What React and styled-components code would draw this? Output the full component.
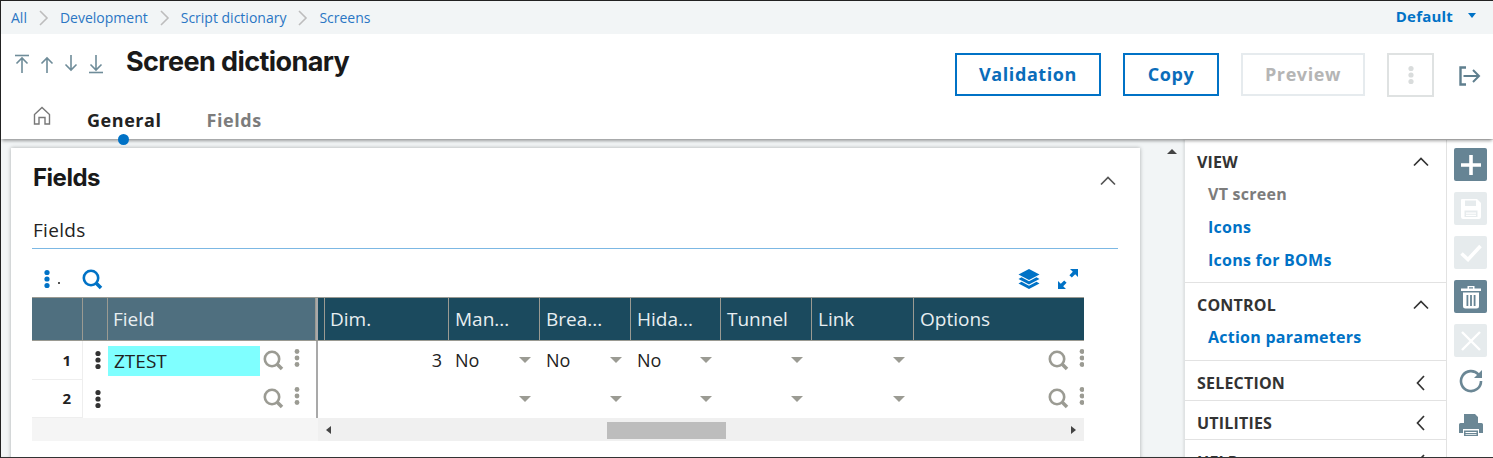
import React from 'react'
import styled, { createGlobalStyle } from 'styled-components'

const GlobalStyle = createGlobalStyle`
  html, body {
    margin: 0;
    padding: 0;
    background: #fff;
  }
  * {
    box-sizing: border-box;
  }
`

const TEMPLATE = '51px 25px 208px 2px 6px 125px 91px 91px 90px 91px 102px 170px'

const ArrowIcon = ({ dir, bar }) => (
  <svg width="16" height="22" viewBox="0 0 16 22" fill="none" stroke="#6f8c99" strokeWidth="1.6">
    <g transform={dir === 'down' ? 'rotate(180 8 11)' : undefined}>
      {bar && <path d="M1 2.500h14" />}
      <path d="M8 20V5M2.500 10.500 8 5l5.500 5.500" />
    </g>
  </svg>
)

const HomeIcon = () => (
  <svg width="18" height="20" viewBox="0 0 18 20" fill="none" stroke="#777" strokeWidth="1.4">
    <path d="M1.500 18V8.500L9 1.500l7.500 7V18h-4.500v-6.500H6V18z" />
  </svg>
)

const ExitIcon = () => (
  <svg width="22" height="20" viewBox="0 0 22 20" fill="none" stroke="#5f7f8e" strokeWidth="2">
    <path d="M7 1.500H1.500v17H7" strokeWidth="2.400" />
    <path d="M4.500 10h15.500M14 4l6 6-6 6" />
  </svg>
)

const SearchIcon = ({ color = '#9b9b93', size = 21 }) => (
  <svg width={size} height={size} viewBox="0 0 21 21" fill="none" stroke={color}>
    <circle cx="9" cy="9" r="7.200" strokeWidth="2.600" />
    <path d="M14 14l5 5" strokeWidth="3.600" />
  </svg>
)

const Dots = ({ color = '#9b9b93', size = 2.4, height = 20 }) => (
  <svg width="8" height={height} viewBox={`0 0 8 ${height}`} fill={color}>
    <circle cx="4" cy={height / 2 - 6.500} r={size} />
    <circle cx="4" cy={height / 2} r={size} />
    <circle cx="4" cy={height / 2 + 6.500} r={size} />
  </svg>
)

const LayersIcon = () => (
  <svg width="22" height="20" viewBox="0 0 22 20" fill="#0072c6">
    <path d="M11 0l10.500 5.500L11 11 .5 5.500z" />
    <path d="M3.500 8.300L11 12.300l7.500-4 3 1.600L11 15.500.5 9.900z" />
    <path d="M3.500 12.800L11 16.800l7.500-4 3 1.600L11 20 .5 14.400z" />
  </svg>
)

const ExpandIcon = () => (
  <svg width="20" height="20" viewBox="0 0 20 20" fill="#0072c6">
    <path d="M12 0h8v8l-2.800-2.800-3.400 3.400-2.400-2.400 3.400-3.400z" />
    <path d="M0 20v-8l2.800 2.800 3.400-3.400 2.400 2.400-3.400 3.400L8 20z" />
  </svg>
)

const Chevron = ({ dir, color = '#333' }) => (
  <svg width="16" height="16" viewBox="0 0 16 16" fill="none" stroke={color} strokeWidth="1.700">
    {dir === 'up' ? <path d="M1 11.500 8 4.500l7 7" /> : <path d="M11 1 4.500 8 11 15" />}
  </svg>
)

const PlusIcon = () => (
  <svg width="22" height="22" viewBox="0 0 22 22" fill="#fff">
    <path d="M9.200 1h3.600v8.200H21v3.600h-8.200V21H9.200v-8.200H1V9.200h8.200z" />
  </svg>
)

const SaveIcon = () => (
  <svg width="22" height="22" viewBox="0 0 22 22" fill="#fff">
    <path d="M2 1h15l4 4v14a2 2 0 0 1-2 2H3a2 2 0 0 1-2-2V2a1 1 0 0 1 1-1zm3 1.500V8h11V2.500zM4.500 12.500V19h13v-6.500z" fillRule="evenodd" />
    <path d="M6 14.500h10v1.200H6zM6 16.800h10V18H6z" />
  </svg>
)

const CheckIcon = () => (
  <svg width="22" height="18" viewBox="0 0 22 18" fill="none" stroke="#fff" strokeWidth="3.600">
    <path d="M1.500 9.500 8 15.500 20.500 2" />
  </svg>
)

const TrashIcon = () => (
  <svg width="20" height="24" viewBox="0 0 20 24" fill="#fff">
    <path d="M0 3.500h6.500V1h7v2.500H20V6H0zM8 2.200v1.300h4V2.200z" fillRule="evenodd" />
    <path d="M2 7.500h16V21a2.500 2.500 0 0 1-2.500 2.500h-11A2.500 2.500 0 0 1 2 21zm3.500 2.500v11h1.800V10zm3.600 0v11h1.800V10zm3.600 0v11h1.800V10z" fillRule="evenodd" />
  </svg>
)

const CloseIcon = () => (
  <svg width="22" height="22" viewBox="0 0 22 22" fill="none" stroke="#fff" strokeWidth="2.400">
    <path d="M2 2l18 18M20 2 2 20" />
  </svg>
)

const RefreshIcon = () => (
  <svg width="24" height="24" viewBox="0 0 24 24" fill="none" stroke="#6b8795" strokeWidth="2.600">
    <path d="M19.500 5.500A10 10 0 1 0 22 12" />
    <path d="M23 1v8h-8z" fill="#6b8795" stroke="none" />
  </svg>
)

const PrintIcon = () => (
  <svg width="24" height="24" viewBox="0 0 24 24" fill="#6b8795">
    <path d="M5 1h11l3 3v6H5zM0 11.500A1.500 1.500 0 0 1 1.500 10h21a1.500 1.500 0 0 1 1.500 1.500V20h-4v-4H4v4H0z" />
    <path d="M5 17.500h14V23H5zm1.500 1.500v1h11v-1zm0 2v.8h11V21z" fillRule="evenodd" />
  </svg>
)

const crumbs = ['All', 'Development', 'Script dictionary', 'Screens']

const dataCols = [
  { title: 'Man...' },
  { title: 'Brea...' },
  { title: 'Hida...' },
  { title: 'Tunnel', empty: true },
  { title: 'Link', empty: true }
]

const rows = [
  { id: 1, field: 'ZTEST', dim: '3', value: 'No' },
  { id: 2, field: '', dim: '', value: '' }
]

const sideGroups = [
  {
    title: 'VIEW',
    open: true,
    pad: 4,
    links: [
      { label: 'VT screen', muted: true },
      { label: 'Icons' },
      { label: 'Icons for BOMs' }
    ]
  },
  { title: 'CONTROL', open: true, pad: 5, links: [{ label: 'Action parameters' }] },
  { title: 'SELECTION' },
  { title: 'UTILITIES' },
  { title: 'HELP' }
]

const App = () => (
  <>
    <GlobalStyle />
    <Frame>
      <Breadcrumb>
        <CrumbList>
          {crumbs.map((crumb, i) => (
            <React.Fragment key={crumb}>
              {i > 0 && (
                <svg width="11" height="16" viewBox="0 0 11 16" fill="none" stroke="#bdbdbd" strokeWidth="1.600">
                  <path d="M2 1l7 7-7 7" />
                </svg>
              )}
              <Crumb>{crumb}</Crumb>
            </React.Fragment>
          ))}
        </CrumbList>
        <Default>
          Default
          <Caret />
        </Default>
      </Breadcrumb>

      <Header>
        <Arrows>
          <ArrowIcon dir="up" bar />
          <ArrowIcon dir="up" />
          <ArrowIcon dir="down" />
          <ArrowIcon dir="down" bar />
        </Arrows>
        <Title>Screen dictionary</Title>
        <Actions>
          <ActionButton $w={146}>Validation</ActionButton>
          <ActionButton $w={96}>Copy</ActionButton>
          <ActionButton $w={124} $disabled>Preview</ActionButton>
          <MoreButton>
            <Dots color="#d9dcdc" size={2.6} height={20} />
          </MoreButton>
          <ExitSlot>
            <ExitIcon />
          </ExitSlot>
        </Actions>
      </Header>

      <Tabs>
        <HomeSlot>
          <HomeIcon />
        </HomeSlot>
        <Tab $active>General</Tab>
        <Tab>Fields</Tab>
      </Tabs>

      <Body>
        <Content>
          <Card>
            <CardHeader>
              <CardTitle>Fields</CardTitle>
              <Chevron dir="up" color="#555" />
            </CardHeader>
            <SubTitle>Fields</SubTitle>
            <Toolbar>
              <ToolGroup>
                <Dots color="#0072c6" size={2.6} height={20} />
                <TinyDot />
                <SearchIcon color="#0072c6" />
              </ToolGroup>
              <ToolGroup $gap={18}>
                <LayersIcon />
                <ExpandIcon />
              </ToolGroup>
            </Toolbar>
            <Table>
              <HeadRow>
                <HeadCell $frozen />
                <HeadCell $frozen />
                <HeadCell $frozen>Field</HeadCell>
                <FrozenBar />
                <HeadCell />
                <HeadCell>Dim.</HeadCell>
                {dataCols.map(col => (
                  <HeadCell key={col.title}>{col.title}</HeadCell>
                ))}
                <HeadCell>Options</HeadCell>
              </HeadRow>
              {rows.map(row => (
                <Row key={row.id}>
                  <RowNumber>{row.id}</RowNumber>
                  <RowMenu>
                    <Dots color="#333" size={2.6} height={20} />
                  </RowMenu>
                  <FieldCell>
                    <FieldValue $filled={!!row.field}>{row.field}</FieldValue>
                    <SearchIcon />
                    <Dots />
                  </FieldCell>
                  <FrozenBar />
                  <span />
                  <DimCell>{row.dim}</DimCell>
                  {dataCols.map(col => (
                    <SelectCell key={col.title}>
                      <span>{col.empty ? '' : row.value}</span>
                      <SelectCaret />
                    </SelectCell>
                  ))}
                  <OptionsCell>
                    <SearchIcon />
                    <Dots />
                  </OptionsCell>
                </Row>
              ))}
              <ScrollRow>
                <ScrollStub />
                <ScrollTrack>
                  <ScrollArrow $left />
                  <ScrollThumb />
                  <ScrollArrow />
                </ScrollTrack>
              </ScrollRow>
            </Table>
          </Card>
          <PageScroll>
            <ScrollUp />
          </PageScroll>
        </Content>

        <Sidebar>
          {sideGroups.map(group => (
            <SideGroup key={group.title} $pad={group.pad}>
              <SideHead $open={group.open}>
                {group.title}
                <Chevron dir={group.open ? 'up' : 'left'} />
              </SideHead>
              {group.links && group.links.map(link => (
                <SideLink key={link.label} $muted={link.muted}>{link.label}</SideLink>
              ))}
            </SideGroup>
          ))}
        </Sidebar>

        <Rail>
          <RailButton $on><PlusIcon /></RailButton>
          <RailButton><SaveIcon /></RailButton>
          <RailButton><CheckIcon /></RailButton>
          <RailButton $on><TrashIcon /></RailButton>
          <RailButton><CloseIcon /></RailButton>
          <RailPlain $h={26}><RefreshIcon /></RailPlain>
          <RailPlain $h={40}><PrintIcon /></RailPlain>
        </Rail>
      </Body>
    </Frame>
  </>
)

const Frame = styled.div`
  width: 1493px;
  height: 458px;
  display: flex;
  flex-direction: column;
  overflow: hidden;
  border-top: 1px solid #222;
  border-left: 1px solid #222;
  border-bottom: 1px solid #333;
  font-family: "Open Sans", sans-serif;
  color: #222;
`

const Breadcrumb = styled.div`
  height: 33px;
  flex: none;
  display: flex;
  align-items: center;
  justify-content: space-between;
  padding: 0 17px 0 10px;
  background: #f2f5f6;
`

const CrumbList = styled.div`
  display: flex;
  align-items: center;
  gap: 11px;
`

const Crumb = styled.span`
  font-size: 14px;
  color: #2a76c4;
`

const Default = styled.div`
  display: flex;
  align-items: center;
  gap: 15px;
  margin-top: -4px;
  font-size: 15px;
  font-weight: 700;
  letter-spacing: 0.2px;
  color: #0072c6;
`

const Caret = styled.i`
  width: 0;
  height: 0;
  margin-top: -1px;
  border-left: 4px solid transparent;
  border-right: 4px solid transparent;
  border-top: 5px solid #0072c6;
`

const Header = styled.div`
  height: 67px;
  flex: none;
  display: flex;
  padding: 17px 0 0 13px;
`

const Arrows = styled.div`
  display: flex;
  gap: 8.5px;
  height: 26px;
  align-items: center;
`

const Title = styled.h1`
  margin: -6px 0 0 22.5px;
  font-family: Inter, sans-serif;
  font-size: 27px;
  line-height: 34px;
  font-weight: 700;
  letter-spacing: -0.6px;
  color: #191919;
`

const Actions = styled.div`
  margin-left: auto;
  display: flex;
  align-items: flex-start;
  gap: 22px;
  padding: 2px 12px 0 0;
`

const ActionButton = styled.div`
  width: ${p => p.$w}px;
  height: 43px;
  display: flex;
  align-items: center;
  justify-content: center;
  padding-bottom: 2px;
  border: 2px solid ${p => (p.$disabled ? '#e6ebee' : '#0072c6')};
  font-size: 18px;
  font-weight: 700;
  letter-spacing: 0.6px;
  color: ${p => (p.$disabled ? '#b5b5b5' : '#0a6dba')};
`

const MoreButton = styled.div`
  width: 47px;
  height: 44px;
  display: flex;
  align-items: center;
  justify-content: center;
  border: 2px solid #dfe2e2;
`

const ExitSlot = styled.div`
  margin: 13px 0 0 3px;
  display: flex;
`

const Tabs = styled.div`
  height: 38px;
  flex: none;
  display: flex;
  align-items: flex-start;
  position: relative;
  z-index: 2;
  box-shadow: 0 3px 3px -1px rgba(0, 0, 0, 0.35);
  background: #fff;
`

const HomeSlot = styled.div`
  width: 86px;
  padding: 5px 0 0 32px;
`

const Tab = styled.div`
  position: relative;
  margin-right: 45px;
  font-size: 18px;
  font-weight: 700;
  line-height: 24px;
  padding-top: 7px;
  letter-spacing: 0.55px;
  color: ${p => (p.$active ? '#222' : '#7c7c7c')};

  ${p => p.$active && `
    &::after {
      content: '';
      position: absolute;
      left: 50%;
      bottom: -13px;
      width: 11px;
      height: 11px;
      margin-left: -6px;
      border-radius: 50%;
      background: #0072c6;
    }
  `}
`

const Body = styled.div`
  flex: 1;
  display: flex;
  min-height: 0;
`

const Content = styled.div`
  width: 1184px;
  flex: none;
  display: flex;
  align-items: flex-start;
  padding: 9px 0 0 10px;
  background: #f2f5f6;
  box-shadow: inset -2px 0 2px rgba(0, 0, 0, 0.08);
`

const Card = styled.div`
  width: 1129px;
  height: 340px;
  flex: none;
  padding: 0 22px 0 21px;
  background: #fff;
  box-shadow: 0 0 4px rgba(0, 0, 0, 0.3);
`

const CardHeader = styled.div`
  height: 58px;
  display: flex;
  align-items: center;
  justify-content: space-between;
  padding: 0 2px 0 1px;

  svg {
    margin-top: 8px;
  }
`

const CardTitle = styled.h2`
  margin: 0;
  font-family: Inter, sans-serif;
  font-size: 24px;
  font-weight: 700;
  letter-spacing: -0.5px;
  color: #191919;
`

const SubTitle = styled.div`
  height: 43px;
  padding: 12px 0 0 1px;
  border-bottom: 1px solid #7cb8e4;
  font-size: 19px;
  line-height: 24px;
  letter-spacing: 0.3px;
  color: #222;
`

const Toolbar = styled.div`
  height: 48px;
  display: flex;
  align-items: center;
  justify-content: space-between;
  padding: 12px 40px 0 11px;
`

const ToolGroup = styled.div`
  display: flex;
  align-items: center;
  gap: ${p => p.$gap || 9}px;
`

const TinyDot = styled.i`
  width: 2px;
  height: 2px;
  margin: 8px 13px 0 -2px;
  background: #555;
`

const Table = styled.div`
  width: 1052px;
  font-size: 18px;
`

const HeadRow = styled.div`
  display: grid;
  grid-template-columns: ${TEMPLATE};
  height: 44px;
  background: #1b4a5e;
  border-top: 1px solid #9a9a92;
  border-bottom: 1px solid #9a9a92;
`

const HeadCell = styled.div`
  padding-left: ${p => (p.$frozen ? 5 : 6)}px;
  font-size: 19px;
  line-height: 42px;
  color: #e8eef1;
  white-space: nowrap;
  overflow: hidden;
  border-right: 1px solid #9a9a92;
  background: ${p => (p.$frozen ? '#4f6f7f' : 'transparent')};

  &:last-child {
    border-right: 0;
  }
`

const FrozenBar = styled.div`
  background: #a9a9a9;
`

const Row = styled.div`
  display: grid;
  grid-template-columns: ${TEMPLATE};
  height: 38.500px;
  align-items: stretch;
`

const RowNumber = styled.div`
  display: flex;
  align-items: center;
  justify-content: flex-end;
  padding-right: 11px;
  font-size: 15px;
  font-weight: 700;
  border-right: 1px solid #eee;
  border-bottom: 1px solid #eee;
`

const RowMenu = styled.div`
  display: flex;
  align-items: center;
  justify-content: center;
  padding-left: 4px;
`

const FieldCell = styled.div`
  display: flex;
  align-items: center;

  svg:last-child {
    margin: -5px 0 0 9px;
  }

  svg:nth-child(2) {
    margin-left: 3px;
  }
`

const FieldValue = styled.div`
  width: 152px;
  height: 30px;
  margin-top: 1px;
  padding-left: 6px;
  font-size: 19px;
  line-height: 31px;
  background: ${p => (p.$filled ? '#7fffff' : 'transparent')};
`

const DimCell = styled.div`
  display: flex;
  align-items: center;
  justify-content: flex-end;
  padding-right: 7px;
`

const SelectCell = styled.div`
  display: flex;
  align-items: center;
  justify-content: space-between;
  padding: 0 9px 0 6px;
`

const SelectCaret = styled.i`
  width: 0;
  height: 0;
  border-left: 6px solid transparent;
  border-right: 6px solid transparent;
  border-top: 6px solid #9b9b93;
`

const OptionsCell = styled.div`
  display: flex;
  align-items: center;
  justify-content: flex-end;
  gap: 9px;
  overflow: hidden;

  svg:last-child {
    margin: -5px -2px 0 0;
  }
`

const ScrollRow = styled.div`
  display: flex;
  height: 23px;
`

const ScrollStub = styled.div`
  width: 286px;
  background: #f5f5f5;
`

const ScrollTrack = styled.div`
  flex: 1;
  display: flex;
  align-items: center;
  justify-content: space-between;
  position: relative;
  padding: 0 8px;
  background: #f0f0f0;
`

const ScrollArrow = styled.i`
  width: 0;
  height: 0;
  border-top: 4px solid transparent;
  border-bottom: 4px solid transparent;
  ${p => (p.$left ? 'border-right: 5px solid #444;' : 'border-left: 5px solid #444;')}
`

const ScrollThumb = styled.div`
  position: absolute;
  left: 289px;
  top: 4px;
  width: 119px;
  height: 17px;
  background: #bdbdbd;
`

const PageScroll = styled.div`
  flex: 1;
  display: flex;
  justify-content: flex-end;
  padding: 0 8px 0 0;
`

const ScrollUp = styled.i`
  width: 0;
  height: 0;
  margin-top: 1px;
  border-left: 5px solid transparent;
  border-right: 5px solid transparent;
  border-bottom: 5px solid #444;
`

const Sidebar = styled.div`
  width: 262px;
  flex: none;
  border-top: 1px solid #e2e2e2;
  border-right: 1px solid #e2e2e2;
  overflow: hidden;
`

const SideGroup = styled.div`
  padding-bottom: ${p => p.$pad || 0}px;
  border-bottom: 1px solid #e2e2e2;
`

const SideHead = styled.div`
  height: ${p => (p.$open ? 39 : 38.5)}px;
  display: flex;
  align-items: center;
  justify-content: space-between;
  padding: ${p => (p.$open ? 4 : 6)}px 17px 0 12px;
  font-size: 16px;
  font-weight: 700;
  letter-spacing: 0.2px;
  color: #333;
`

const SideLink = styled.div`
  height: 33px;
  line-height: 30px;
  padding-left: 23px;
  font-size: 16px;
  font-weight: 700;
  letter-spacing: 0.25px;
  color: ${p => (p.$muted ? '#7c7c7c' : '#0072c6')};
`

const Rail = styled.div`
  flex: 1;
  display: flex;
  flex-direction: column;
  align-items: center;
  gap: 11px;
  padding: 8px 0 0 1px;
  border-top: 1px solid #e2e2e2;
`

const RailButton = styled.div`
  width: 33px;
  height: 33px;
  flex: none;
  display: flex;
  align-items: center;
  justify-content: center;
  border-radius: 2px;
  background: ${p => (p.$on ? '#668494' : '#e6ebed')};
`

const RailPlain = styled.div`
  height: ${p => p.$h}px;
  flex: none;
  display: flex;
  align-items: center;
  justify-content: center;
`

export default App
